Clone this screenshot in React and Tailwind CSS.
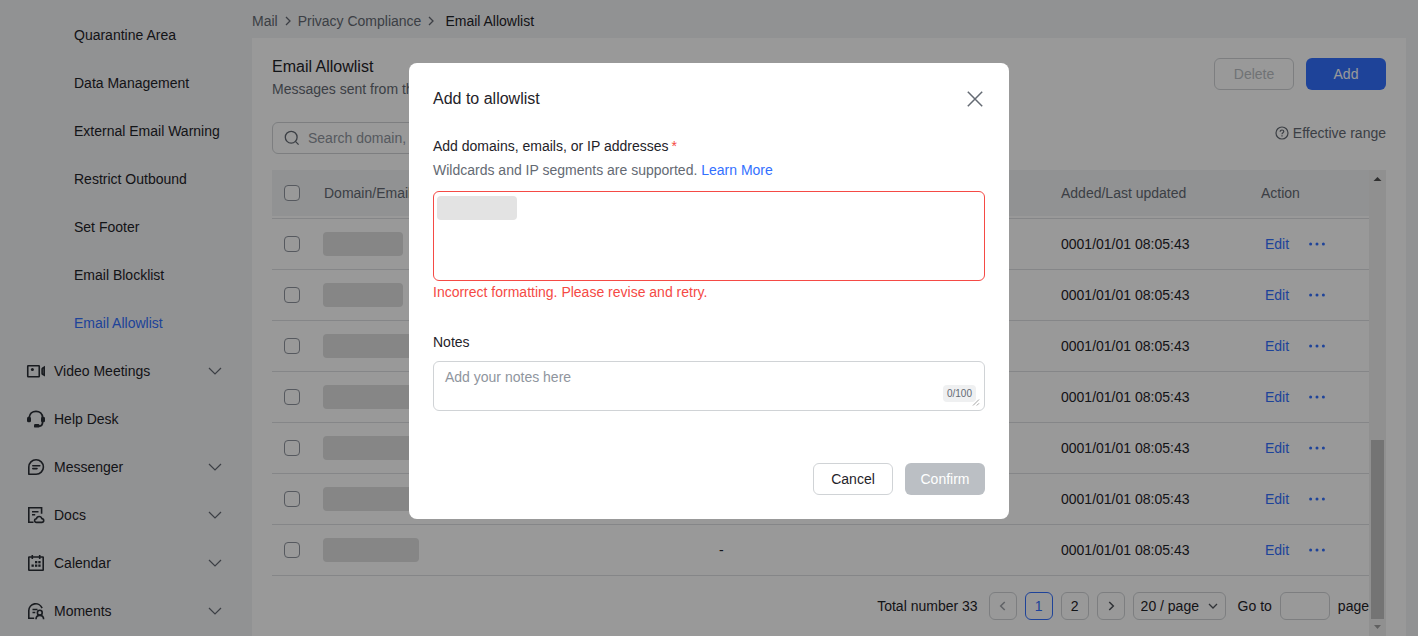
import React, { useState } from "react";

const mailItems = [
  "Quarantine Area",
  "Data Management",
  "External Email Warning",
  "Restrict Outbound",
  "Set Footer",
  "Email Blocklist",
  "Email Allowlist",
];

const rows = [
  { id: 1, wide: false },
  { id: 2, wide: false },
  { id: 3, wide: true },
  { id: 4, wide: true },
  { id: 5, wide: true },
  { id: 6, wide: true },
  { id: 7, wide: true },
];

const NavIcon = ({ children }) => (
  <svg
    viewBox="0 0 20 20"
    className="w-5 h-5 shrink-0 text-[#2b2f36]"
    fill="none"
    stroke="currentColor"
    strokeWidth="1.6"
    aria-hidden="true"
  >
    {children}
  </svg>
);

const VideoIcon = () => (
  <NavIcon>
    <rect x="1.75" y="4.75" width="11.5" height="11" rx="0.4" />
    <circle cx="6.4" cy="8.5" r="1.5" fill="currentColor" stroke="none" />
    <path
      d="M18.2 6.2v8l-1.6-.9a.9.9 0 0 1-.5-.8V7.9c0-.3.2-.6.5-.8z"
      fill="currentColor"
      fillOpacity="0.4"
    />
  </NavIcon>
);

const HeadsetIcon = () => (
  <NavIcon>
    <path
      d="M3.2 8.5C3.6 4.700 6.400 2.300 10 2.300s6.400 2.400 6.600 6.200v4.200c0 2.600-1.200 4.400-3.600 4.500"
      strokeWidth="1.8"
    />
    <rect x="1" y="7.800" width="4" height="5.400" rx="1.500" fill="currentColor" stroke="none" />
    <rect x="15" y="7.800" width="4" height="5.400" rx="1.500" fill="currentColor" stroke="none" />
    <rect x="8" y="15" width="5.500" height="3.600" rx="1.200" fill="currentColor" stroke="none" />
  </NavIcon>
);

const MessengerIcon = () => (
  <NavIcon>
    <path d="M2.800 17.300V10a7.300 7.300 0 1 1 7.300 7.300z" strokeLinejoin="round" />
    <path d="M6.800 8.700h7M6.800 11.600h4.200" strokeLinecap="round" />
  </NavIcon>
);

const DocsIcon = () => (
  <NavIcon>
    <path d="M7.500 17.200H2.800V2.800h12.800v6" />
    <path d="M6 6.800h6.500M6 9.800h3.200" />
    <path
      d="M10.400 17.400a1.800 1.800 0 0 1 0-3.600c.3-1.500 1.300-2.300 2.700-2.300s2.400.8 2.700 2.100a1.900 1.900 0 0 1 0 3.800z"
      strokeLinejoin="round"
    />
  </NavIcon>
);

const CalendarIcon = () => (
  <NavIcon>
    <rect x="2.800" y="4" width="14.400" height="13.200" rx="0.3" />
    <path d="M6.300 2v4M13.700 2v4" />
    <g fill="currentColor" stroke="none">
      <rect x="9" y="8" width="2.300" height="2.300" />
      <rect x="12.300" y="8" width="2.300" height="2.300" />
      <rect x="5.500" y="11.500" width="2.300" height="2.300" />
      <rect x="9" y="11.500" width="2.300" height="2.300" />
      <rect x="12.300" y="11.500" width="2.300" height="2.300" />
    </g>
  </NavIcon>
);

const MomentsIcon = () => (
  <NavIcon>
    <path d="M8.200 17.200H2.800V9.600a6.900 6.900 0 0 1 13.300-2.500" />
    <path d="M6.500 8.500h5M6.500 11.500h2.800" />
    <circle cx="13.800" cy="11.700" r="2.400" />
    <path d="M10 18.300c0-2.200 1.600-3.900 3.800-3.900s3.800 1.700 3.800 3.900" />
  </NavIcon>
);

const navItems = [
  { label: "Video Meetings", Icon: VideoIcon, expandable: true },
  { label: "Help Desk", Icon: HeadsetIcon, expandable: false },
  { label: "Messenger", Icon: MessengerIcon, expandable: true },
  { label: "Docs", Icon: DocsIcon, expandable: true },
  { label: "Calendar", Icon: CalendarIcon, expandable: true },
  { label: "Moments", Icon: MomentsIcon, expandable: true },
];

const Chevron = ({ className, d = "M4.5 2.5 8 6 4.5 9.5" }) => (
  <svg
    viewBox="0 0 12 12"
    className={className}
    fill="none"
    stroke="currentColor"
    strokeWidth="1.3"
    aria-hidden="true"
  >
    <path d={d} />
  </svg>
);

const Checkbox = ({ label }) => (
  <input
    type="checkbox"
    aria-label={label}
    className="block w-4 h-4 ml-3 appearance-none rounded border border-[#8f959e] bg-white checked:bg-[#3370ff]"
  />
);

const Sidebar = () => (
  <nav className="w-[252px] shrink-0 pt-[11px] overflow-hidden">
    <ul>
      {mailItems.map((item) => (
        <li key={item}>
          <a
            href="#"
            className={`flex items-center h-12 pl-[74px] ${
              item === "Email Allowlist" ? "text-[#3370ff]" : ""
            }`}
          >
            {item}
          </a>
        </li>
      ))}
      {navItems.map(({ label, Icon, expandable }) => (
        <li key={label}>
          <button className="flex items-center w-full h-12 pl-[26px] pr-[30px] text-left">
            <Icon />
            <span className="flex-1 ml-2">{label}</span>
            {expandable && (
              <svg
                viewBox="0 0 14 8"
                className="w-3.5 h-2 text-[#646a73]"
                fill="none"
                stroke="currentColor"
                strokeWidth="1.2"
                aria-hidden="true"
              >
                <path d="M1 1l6 6 6-6" />
              </svg>
            )}
          </button>
        </li>
      ))}
    </ul>
  </nav>
);

const AllowlistTable = () => (
  <table className="w-full table-fixed border-separate border-spacing-0 text-left">
    <colgroup>
      <col className="w-[51px]" />
      <col />
      <col className="w-[342px]" />
      <col className="w-[200px]" />
      <col className="w-[108px]" />
    </colgroup>
    <thead>
      <tr className="h-[46px] bg-[#f2f3f5] text-[#646a73]">
        <th className="p-0">
          <Checkbox label="Select all" />
        </th>
        <th className="p-0 pl-px font-normal">Domain/Email/IP</th>
        <th className="p-0 font-normal">Notes</th>
        <th className="p-0 font-normal">Added/Last updated</th>
        <th className="p-0 font-normal">Action</th>
      </tr>
    </thead>
    <tbody>
      <tr>
        <td colSpan={5} className="h-[3px] p-0 border-b border-[#dee0e3]"></td>
      </tr>
      {rows.map((row) => (
        <tr key={row.id} className="h-[51px]">
          <td className="p-0 border-b border-[#dee0e3]">
            <Checkbox label={`Select row ${row.id}`} />
          </td>
          <td className="p-0 border-b border-[#dee0e3]">
            <div
              className={`h-6 rounded bg-[#dfdfdf] ${row.wide ? "w-24" : "w-20"}`}
            ></div>
          </td>
          <td className="p-0 border-b border-[#dee0e3]">-</td>
          <td className="p-0 border-b border-[#dee0e3]">0001/01/01 08:05:43</td>
          <td className="p-0 border-b border-[#dee0e3] text-[#3370ff]">
            <div className="flex items-center gap-5 pl-1">
              <button>Edit</button>
              <button aria-label="More">
                <svg
                  viewBox="0 0 16 4"
                  className="block w-4 h-1"
                  fill="currentColor"
                  aria-hidden="true"
                >
                  <circle cx="1.600" cy="2" r="1.500" />
                  <circle cx="8" cy="2" r="1.500" />
                  <circle cx="14.400" cy="2" r="1.500" />
                </svg>
              </button>
            </div>
          </td>
        </tr>
      ))}
    </tbody>
  </table>
);

const Pagination = () => (
  <div className="flex items-center justify-end gap-2 pt-4 whitespace-nowrap">
    <span className="mr-[3px]">Total number 33</span>
    <button
      disabled
      aria-label="Previous page"
      className="flex items-center justify-center w-7 h-7 rounded-md border border-[#d0d3d6] text-[#a0a4aa]"
    >
      <Chevron className="w-3.5 h-3.5" d="M7.500 2.500 4 6l3.500 3.500" />
    </button>
    <button className="w-7 h-7 rounded-md border border-[#3370ff] text-[#3370ff]">
      1
    </button>
    <button className="w-7 h-7 rounded-md border border-[#d0d3d6]">2</button>
    <button
      aria-label="Next page"
      className="flex items-center justify-center w-7 h-7 rounded-md border border-[#d0d3d6] text-[#51565d]"
    >
      <Chevron className="w-3.5 h-3.5" />
    </button>
    <div className="relative">
      <select
        aria-label="Rows per page"
        className="block w-[93px] h-7 pl-[7px] appearance-none rounded-md border border-[#d0d3d6]"
      >
        <option>20 / page</option>
        <option>50 / page</option>
      </select>
      <Chevron
        className="absolute right-[7px] top-2 w-3 h-3 pointer-events-none text-[#51565d]"
        d="M2 4l4 4 4-4"
      />
    </div>
    <label htmlFor="goto" className="ml-1">
      Go to
    </label>
    <input
      id="goto"
      type="text"
      className="w-[50px] h-7 px-2 rounded-md border border-[#d0d3d6]"
    />
    <span>page</span>
  </div>
);

const ScrollTrack = () => (
  <div className="flex flex-col items-center justify-between w-[17px] shrink-0 bg-[#f1f1f1]">
    <svg viewBox="0 0 17 17" className="w-[17px] h-[17px]" aria-hidden="true">
      <path d="M4.500 11 8.500 7l4 4z" fill="#505050" />
    </svg>
    <div className="flex-1"></div>
    <div className="w-[13px] h-[179px] bg-[#c1c1c1]"></div>
    <svg viewBox="0 0 17 17" className="w-[17px] h-[17px]" aria-hidden="true">
      <path d="M5 6h7L8.500 10z" fill="#a0a0a0" />
    </svg>
  </div>
);

const AddModal = ({ onClose }) => {
  const [notes, setNotes] = useState("");
  const [domains, setDomains] = useState("");

  return (
    <div className="fixed inset-0 flex items-start justify-center pt-[63px] bg-black/40">
      <div
        role="dialog"
        aria-labelledby="dialog-title"
        className="w-[600px] p-6 rounded-lg bg-white"
      >
        <div className="flex items-center justify-between h-6">
          <h2 id="dialog-title" className="text-base leading-6">
            Add to allowlist
          </h2>
          <button aria-label="Close" onClick={onClose} className="text-[#646a73]">
            <svg
              viewBox="0 0 20 20"
              className="block w-5 h-5"
              fill="none"
              stroke="currentColor"
              strokeWidth="1.5"
              aria-hidden="true"
            >
              <path d="M2.800 2.800 17.200 17.200M17.200 2.800 2.800 17.200" />
            </svg>
          </button>
        </div>

        <label htmlFor="domains" className="block mt-6">
          Add domains, emails, or IP addresses
          <span className="ml-[3px] text-[#f54a45]">*</span>
        </label>
        <p className="mt-0.5 text-[#646a73]">
          Wildcards and IP segments are supported.{" "}
          <a href="#" className="text-[#3370ff]">
            Learn More
          </a>
        </p>
        <div className="flex items-start gap-2 h-[90px] mt-[10px] px-[3px] py-1 rounded-md border border-[#f54a45]">
          <div className="w-20 h-6 rounded bg-[#e3e3e3]"></div>
          <textarea
            id="domains"
            value={domains}
            onChange={(e) => setDomains(e.target.value)}
            className="flex-1 h-full resize-none outline-none"
          />
        </div>
        <p className="text-[#f54a45]">
          Incorrect formatting. Please revise and retry.
        </p>

        <label htmlFor="notes" className="block mt-7">
          Notes
        </label>
        <div className="relative mt-2 pt-1 pb-[3px] pr-1 rounded-md border border-[#d0d3d6]">
          <textarea
            id="notes"
            maxLength={100}
            value={notes}
            onChange={(e) => setNotes(e.target.value)}
            placeholder="Add your notes here"
            className="block w-full h-[41px] pl-[11px] resize-none outline-none placeholder:text-[#8f959e]"
          />
          <span className="absolute right-2 bottom-2 px-1 rounded bg-[#eff0f1] text-[10px] leading-[17px] text-[#646a73] pointer-events-none">
            {notes.length}/100
          </span>
          <svg
            viewBox="0 0 8 8"
            className="absolute right-1 bottom-1 w-2 h-2 text-[#9a9a9a]"
            stroke="currentColor"
            strokeWidth="0.9"
            aria-hidden="true"
          >
            <path d="M1 7.500 7 1.500M4.800 7.500 7 5.300" />
          </svg>
        </div>

        <div className="flex justify-end gap-3 mt-[52px]">
          <button
            onClick={onClose}
            className="w-20 h-8 rounded-md border border-[#d0d3d6]"
          >
            Cancel
          </button>
          <button disabled className="w-20 h-8 rounded-md bg-[#bbbfc4] text-white">
            Confirm
          </button>
        </div>
      </div>
    </div>
  );
};

const App = () => {
  const [showModal, setShowModal] = useState(true);

  return (
    <div className="flex h-screen overflow-hidden bg-[#f2f3f5] font-['Liberation_Sans',Arial,sans-serif] text-sm leading-[22px] text-[#1f2329]">
      <Sidebar />

      <main className="flex flex-col flex-1 min-w-0 pr-3">
        {/* Breadcrumb */}
        <div className="flex items-center gap-1 h-[38px] pt-1 text-[#646a73]">
          <a href="#">Mail</a>
          <Chevron className="w-3 h-3" d="M4 2l4 4-4 4" />
          <a href="#">Privacy Compliance</a>
          <Chevron className="w-3 h-3" d="M4 2l4 4-4 4" />
          <span className="ml-1 text-[#1f2329]">Email Allowlist</span>
        </div>

        <div className="flex flex-col flex-1 min-h-0 px-5 pt-4 bg-white">
          <div className="flex items-start justify-between">
            <div>
              <h1 className="text-base leading-[26px]">Email Allowlist</h1>
              <p className="leading-[18px] text-[#646a73]">
                Messages sent from the allowlist will not be marked as spam.
              </p>
            </div>
            <div className="flex gap-3 pt-1">
              <button
                disabled
                className="w-20 h-8 rounded-md border border-[#d0d3d6] text-[#bbbfc4]"
              >
                Delete
              </button>
              <button
                onClick={() => setShowModal(true)}
                className="w-20 h-8 rounded-md bg-[#3370ff] text-white"
              >
                Add
              </button>
            </div>
          </div>

          <div className="flex items-start justify-between mt-6">
            <label className="flex items-center w-80 h-8 pl-[11px] rounded-md border border-[#d0d3d6]">
              <svg
                viewBox="0 0 16 16"
                className="w-4 h-4 shrink-0 text-[#646a73]"
                fill="none"
                stroke="currentColor"
                strokeWidth="1.3"
                aria-hidden="true"
              >
                <circle cx="7.200" cy="7.200" r="5.900" />
                <path d="m11.400 11.400 3.200 3.200" />
              </svg>
              <input
                type="text"
                aria-label="Search"
                placeholder="Search domain, email, or IP address"
                className="flex-1 min-w-0 ml-2 outline-none placeholder:text-[#8f959e]"
              />
            </label>
            <button className="flex items-center gap-1 text-[#646a73]">
              <svg
                viewBox="0 0 14 14"
                className="w-3.5 h-3.5"
                fill="none"
                stroke="currentColor"
                strokeWidth="1.2"
                aria-hidden="true"
              >
                <circle cx="7" cy="7" r="6" />
                <path d="M5.200 5.700c0-1 .7-1.700 1.800-1.700s1.800.6 1.800 1.500C8.800 6.700 7 6.700 7 8.200M7 9.200v1.200" />
              </svg>
              Effective range
            </button>
          </div>

          <div className="flex flex-1 min-h-0 mt-4">
            <div className="flex-1 min-w-0 overflow-hidden">
              <AllowlistTable />
              <Pagination />
            </div>
            <ScrollTrack />
          </div>
        </div>
      </main>

      {showModal && <AddModal onClose={() => setShowModal(false)} />}
    </div>
  );
};

export default App;
